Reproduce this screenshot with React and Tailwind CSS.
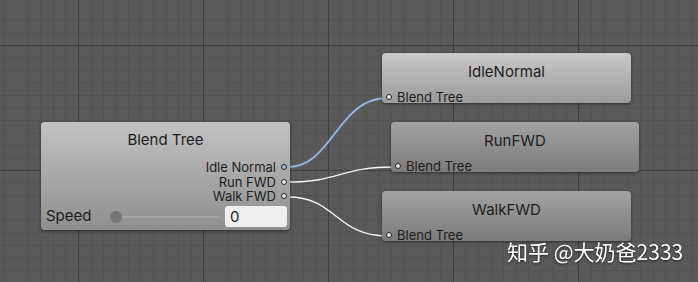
import React from 'react';

const font = { fontFamily: 'Inter, "Noto Sans", sans-serif' };

function Port({ blue }) {
    return (
        <span className={`w-[6px] h-[6px] rounded-full border border-[#222] shrink-0 ${blue ? 'bg-[#9fb8d8]' : 'bg-[#e8e8e8]'}`}></span>
    );
}

function StateNode({ title, left, top, dark, width = 249 }) {
    return (
        <div
            className={`absolute h-[50px] rounded-[4px] shadow-[0_1px_3px_rgba(0,0,0,0.5)] flex flex-col ${dark ? 'bg-gradient-to-b from-[#a2a2a2] to-[#7b7b7b]' : 'bg-gradient-to-b from-[#c9c9c9] to-[#9b9b9b]'}`}
            style={{ left, top, width }}
        >
            <div className="h-5 mt-[9px] text-center text-[15px] leading-5 text-[#1c1c1c]">{title}</div>
            <div className="flex items-center h-[14px] mt-[8px] pl-[4px]">
                <Port />
                <span className="ml-[5px] text-[13px] leading-[14px] text-[#1c1c1c]">Blend Tree</span>
            </div>
        </div>
    );
}

export default function App() {
    return (
        <div className="relative w-[698px] h-[282px] overflow-hidden bg-[#595959]" style={font}>
            {/* grid */}
            <svg className="absolute inset-0" width="698" height="282">
                <defs>
                    <pattern id="minor" x="3" y="7.5" width="12.5" height="12.5" patternUnits="userSpaceOnUse">
                        <path d="M0 0.5 H12.5 M0.5 0 V12.5" stroke="#525252" strokeWidth="1" fill="none" />
                    </pattern>
                    <pattern id="major" x="78" y="45" width="125" height="125" patternUnits="userSpaceOnUse">
                        <path d="M0 0.5 H125 M0.5 0 V125" stroke="#3e3e3e" strokeWidth="1.2" fill="none" />
                    </pattern>
                </defs>
                <rect width="698" height="282" fill="url(#minor)" />
                <rect width="698" height="282" fill="url(#major)" />
            </svg>

            {/* connections */}
            <svg className="absolute inset-0" width="698" height="282">
                <path d="M288 167 C332 167 338 98 387 98" stroke="#6f8fbf" strokeWidth="3" strokeOpacity="0.45" fill="none" />
                <path d="M288 167 C332 167 338 98 387 98" stroke="#a9c2e4" strokeWidth="1.4" fill="none" />
                <path d="M288 182 C340 182 340 167 395 167" stroke="#f4f4f4" strokeWidth="1.4" fill="none" />
                <path d="M288 197 C336 197 336 236 387 236" stroke="#f4f4f4" strokeWidth="1.4" fill="none" />
            </svg>

            {/* blend tree node */}
            <div className="absolute left-[41px] top-[122px] w-[249px] h-[108px] rounded-[4px] bg-gradient-to-b from-[#c2c2c2] to-[#8f8f8f] shadow-[0_1px_3px_rgba(0,0,0,0.5)] flex flex-col text-[#1c1c1c]">
                <div className="h-5 mt-[8px] text-center text-[15px] leading-5">Blend Tree</div>
                <div className="mt-[10px] flex flex-col items-end pr-[3px] text-[13px] leading-[14px]">
                    <div className="flex items-center h-[14px] gap-[5px]"><span>Idle Normal</span><Port blue /></div>
                    <div className="flex items-center h-[15px] gap-[5px]"><span>Run FWD</span><Port /></div>
                    <div className="flex items-center h-[14px] gap-[5px]"><span>Walk FWD</span><Port /></div>
                </div>
                <div className="flex items-center mt-[3px] pl-[5px] pr-[3px] h-[21px]">
                    <span className="w-[64px] text-[15px]">Speed</span>
                    <div className="relative flex-1 flex items-center h-full mr-[6px]">
                        <div className="absolute left-[4px] right-0 h-[2px] bg-[#a4a4a4]"></div>
                        <div className="relative w-[12px] h-[12px] rounded-full bg-[#777]"></div>
                    </div>
                    <div className="w-[62px] h-[21px] rounded-[3px] bg-[#efefef] text-[15px] leading-[21px] pl-[5px]">0</div>
                </div>
            </div>

            <StateNode title="IdleNormal" left={382} top={53} />
            <StateNode title="RunFWD" left={391} top={122} dark width={248} />
            <StateNode title="WalkFWD" left={382} top={191} dark />

            <div
                className="absolute left-[507px] top-[237px] text-[21px] leading-[28px] text-white drop-shadow-[0_1px_1px_rgba(0,0,0,0.6)]"
                style={{ fontFamily: '"Noto Sans CJK SC", "Noto Sans", sans-serif' }}
            >
                知乎 @大奶爸2333
            </div>
        </div>
    );
}
